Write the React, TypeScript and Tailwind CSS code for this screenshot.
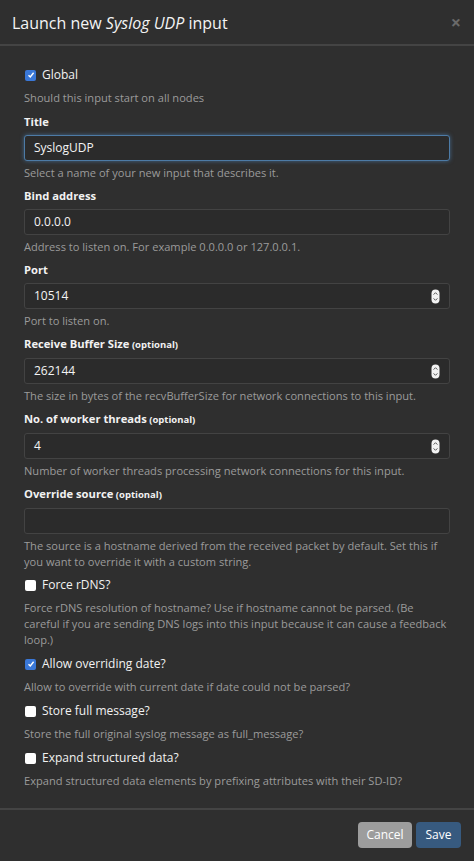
import { ReactNode } from 'react';

const FONT = { fontFamily: '"Open Sans", "Noto Sans", sans-serif' };

function Spinner() {
  return (
    <svg width="9" height="15" viewBox="0 0 9 15" className="shrink-0">
      <rect x="0.5" y="0.5" width="8" height="14" rx="4" fill="#f2f2f2" />
      <path d="M2.6 5.6 L4.5 3.7 L6.4 5.6" stroke="#555" strokeWidth="1" fill="none" />
      <path d="M2.6 9.4 L4.5 11.3 L6.4 9.4" stroke="#555" strokeWidth="1" fill="none" />
    </svg>
  );
}

function Field({
  label,
  optional,
  value,
  help,
  focused,
  number,
}: {
  label: string;
  optional?: boolean;
  value: string;
  help: ReactNode;
  focused?: boolean;
  number?: boolean;
}) {
  return (
    <div className="mb-[7px]">
      <div className="text-[11.2px] font-bold leading-4 text-[#f2f2f2]">
        {label}
        {optional && <span className="text-[9.5px]"> (optional)</span>}
      </div>
      <div
        className={
          'mt-[5px] flex h-[26px] items-center justify-between rounded-[3px] border px-[9px] text-[12px] text-[#f4f4f4] ' +
          (focused
            ? 'border-[#4d7ba6] bg-[#2b2b2b] shadow-[0_0_4px_rgba(80,140,200,0.6)]'
            : 'border-[#434343] bg-[#2b2b2b]')
        }
      >
        <span>{value}</span>
        {number && <Spinner />}
      </div>
      <div className="mt-1 text-[11.1px] leading-4 text-[#9b9b9b]">{help}</div>
    </div>
  );
}

function Check({ label, checked, help }: { label: string; checked?: boolean; help: ReactNode }) {
  return (
    <div className="mb-[8px]">
      <div className="flex h-4 items-center gap-[5px] pl-px text-[12px] text-[#f2f2f2]">
        {checked ? (
          <span className="flex h-[11px] w-[11px] items-center justify-center rounded-[2px] bg-[#3a78d8]">
            <svg width="8" height="8" viewBox="0 0 8 8">
              <path d="M1.5 4.2 L3.3 6 L6.6 1.8" stroke="#fff" strokeWidth="1.4" fill="none" />
            </svg>
          </span>
        ) : (
          <span className="h-[11px] w-[11px] rounded-[2px] bg-white" />
        )}
        <span className="ml-px">{label}</span>
      </div>
      <div className="mt-[7px] text-[11.1px] leading-4 text-[#9b9b9b]">{help}</div>
    </div>
  );
}

export default function App() {
  return (
    <div className="h-[861px] w-[474px] overflow-hidden bg-[#2f2f2f]" style={FONT}>
      {/* header */}
      <div className="flex h-[46px] items-center justify-between border-b-2 border-[#444] pl-3 pr-[13px]">
        <h4 className="pt-[2px] text-[16px] text-[#f4f4f4]">
          Launch new <em>Syslog UDP</em> input
        </h4>
        <span className="text-[18px] font-bold text-[#6a6a6a]">×</span>
      </div>

      {/* body */}
      <div className="px-6 pt-[21px] pb-[11px]">
        <Check label="Global" checked help="Should this input start on all nodes" />
        <Field label="Title" value="SyslogUDP" focused help="Select a name of your new input that describes it." />
        <Field label="Bind address" value="0.0.0.0" help="Address to listen on. For example 0.0.0.0 or 127.0.0.1." />
        <Field label="Port" value="10514" number help="Port to listen on." />
        <Field
          label="Receive Buffer Size"
          optional
          value="262144"
          number
          help="The size in bytes of the recvBufferSize for network connections to this input."
        />
        <Field
          label="No. of worker threads"
          optional
          value="4"
          number
          help="Number of worker threads processing network connections for this input."
        />
        <Field
          label="Override source"
          optional
          value=""
          help="The source is a hostname derived from the received packet by default. Set this if you want to override it with a custom string."
        />
        <Check
          label="Force rDNS?"
          help="Force rDNS resolution of hostname? Use if hostname cannot be parsed. (Be careful if you are sending DNS logs into this input because it can cause a feedback loop.)"
        />
        <Check
          label="Allow overriding date?"
          checked
          help="Allow to override with current date if date could not be parsed?"
        />
        <Check label="Store full message?" help="Store the full original syslog message as full_message?" />
        <Check
          label="Expand structured data?"
          help="Expand structured data elements by prefixing attributes with their SD-ID?"
        />
      </div>

      {/* footer */}
      <div className="flex justify-end gap-1 border-t-2 border-[#444] pt-[12px] pr-[13px]">
        <button type="button" className="h-[26px] w-[54px] rounded-[4px] bg-[#9d9d9d] text-[12px] text-white">
          Cancel
        </button>
        <button type="button" className="h-[26px] w-[45px] rounded-[4px] bg-[#375a7f] text-[12px] text-white">
          Save
        </button>
      </div>
    </div>
  );
}
